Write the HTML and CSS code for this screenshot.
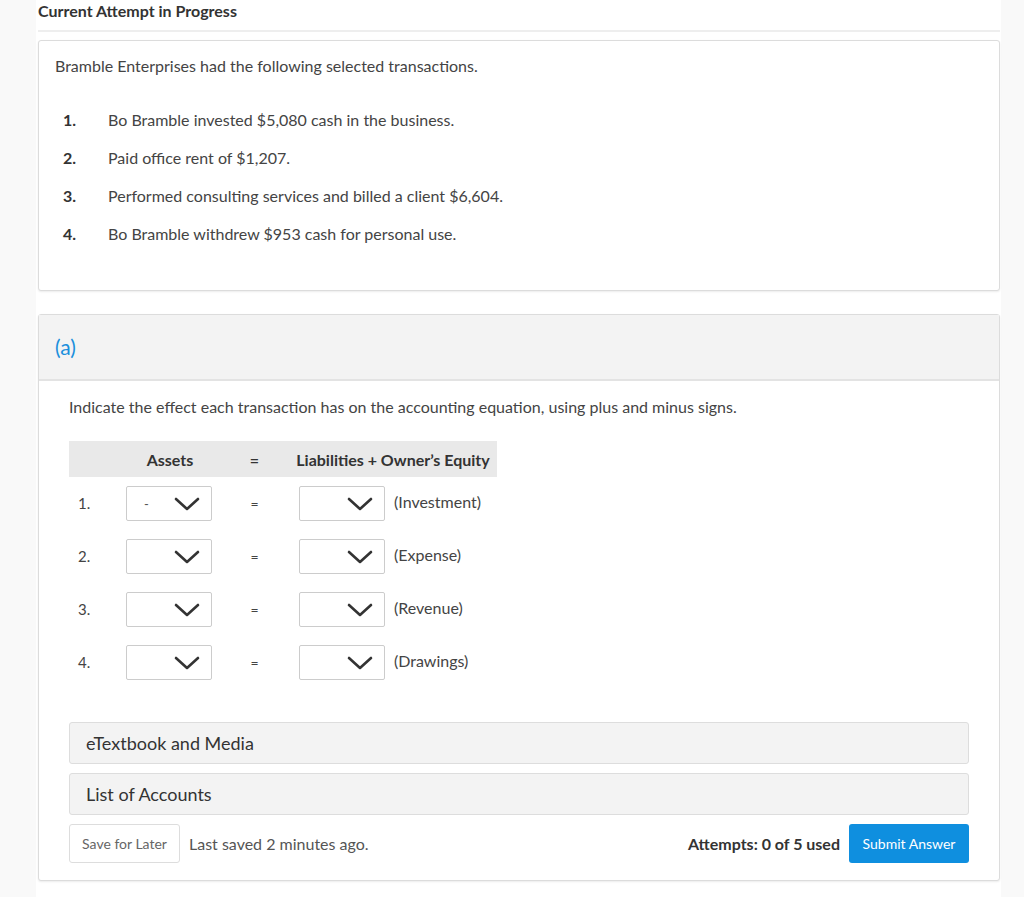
FILE: index.html
```html
<!DOCTYPE html>
<html lang="en">
<head>
	<meta charset="UTF-8">
	<title>Current Attempt in Progress</title>
	<link rel="stylesheet" href="styles.css">
</head>
<body>
	<div class="page">
		<div class="attempt-title">Current Attempt in Progress</div>

		<div class="card question">
			<p class="intro">Bramble Enterprises had the following selected transactions.</p>
			<ol class="trans">
				<li><span class="num">1.</span>Bo Bramble invested $5,080 cash in the business.</li>
				<li><span class="num">2.</span>Paid office rent of $1,207.</li>
				<li><span class="num">3.</span>Performed consulting services and billed a client $6,604.</li>
				<li><span class="num">4.</span>Bo Bramble withdrew $953 cash for personal use.</li>
			</ol>
		</div>

		<div class="card part">
			<div class="part-head">(a)</div>
			<div class="part-body">
				<p class="instr">Indicate the effect each transaction has on the accounting equation, using plus and minus signs.</p>

				<table class="eq">
					<thead>
						<tr>
							<th class="c-num"></th>
							<th class="c-as">Assets</th>
							<th class="c-eq">=</th>
							<th class="c-li">Liabilities + Owner’s Equity</th>
						</tr>
					</thead>
					<tbody>
						<tr>
							<td class="c-num">1.</td>
							<td class="c-as"><div class="sel"><span class="val">-</span><svg class="chev" width="26" height="14" viewBox="0 0 26 14"><polyline points="2,2 13,12 24,2"/></svg></div></td>
							<td class="c-eq">=</td>
							<td class="c-li"><div class="li-wrap"><div class="sel"><span class="val"></span><svg class="chev" width="26" height="14" viewBox="0 0 26 14"><polyline points="2,2 13,12 24,2"/></svg></div><span class="tag">(Investment)</span></div></td>
						</tr>
						<tr>
							<td class="c-num">2.</td>
							<td class="c-as"><div class="sel"><span class="val"></span><svg class="chev" width="26" height="14" viewBox="0 0 26 14"><polyline points="2,2 13,12 24,2"/></svg></div></td>
							<td class="c-eq">=</td>
							<td class="c-li"><div class="li-wrap"><div class="sel"><span class="val"></span><svg class="chev" width="26" height="14" viewBox="0 0 26 14"><polyline points="2,2 13,12 24,2"/></svg></div><span class="tag">(Expense)</span></div></td>
						</tr>
						<tr>
							<td class="c-num">3.</td>
							<td class="c-as"><div class="sel"><span class="val"></span><svg class="chev" width="26" height="14" viewBox="0 0 26 14"><polyline points="2,2 13,12 24,2"/></svg></div></td>
							<td class="c-eq">=</td>
							<td class="c-li"><div class="li-wrap"><div class="sel"><span class="val"></span><svg class="chev" width="26" height="14" viewBox="0 0 26 14"><polyline points="2,2 13,12 24,2"/></svg></div><span class="tag">(Revenue)</span></div></td>
						</tr>
						<tr>
							<td class="c-num">4.</td>
							<td class="c-as"><div class="sel"><span class="val"></span><svg class="chev" width="26" height="14" viewBox="0 0 26 14"><polyline points="2,2 13,12 24,2"/></svg></div></td>
							<td class="c-eq">=</td>
							<td class="c-li"><div class="li-wrap"><div class="sel"><span class="val"></span><svg class="chev" width="26" height="14" viewBox="0 0 26 14"><polyline points="2,2 13,12 24,2"/></svg></div><span class="tag">(Drawings)</span></div></td>
						</tr>
					</tbody>
				</table>

				<div class="bar">eTextbook and Media</div>
				<div class="bar">List of Accounts</div>

				<div class="actions">
					<button class="btn-save">Save for Later</button>
					<span class="saved">Last saved 2 minutes ago.</span>
					<span class="attempts">Attempts: 0 of 5 used</span>
					<button class="btn-submit">Submit Answer</button>
				</div>
			</div>
		</div>
	</div>
</body>
</html>
```

FILE: styles.css
```css
*{padding:0;margin:0;box-sizing:border-box;}
body{background:#f9f9f9;font-family:Lato,"Open Sans",sans-serif;color:#333;}
.page{margin-left:36px;width:965px;min-height:897px;background:#fff;padding:0 1px 0 2px;}

.attempt-title{font-size:16px;font-weight:bold;color:#333;height:32px;padding-top:1px;border-bottom:2px solid #eee;}

.card{border:1px solid #dcdcdc;border-radius:3px;box-shadow:0 1px 2px rgba(0,0,0,0.08);background:#fff;}
.question{margin-top:8px;height:251px;padding:15px 16px 0 16px;}
.intro{font-size:16px;line-height:20px;color:#444;}
.trans{list-style:none;margin-top:24px;}
.trans li{display:flex;height:38px;align-items:center;font-size:16px;color:#444;}
.trans .num{width:53px;padding-left:8px;font-weight:bold;color:#333;}

.part{margin-top:23px;padding-bottom:17px;}
.part-head{height:66px;background:#f3f3f3;border-bottom:2px solid #e3e3e3;color:#1a8fdc;font-size:21px;padding:19px 0 0 16px;}
.part-body{padding:0 30px;}
.instr{font-size:16px;line-height:20px;color:#444;margin-top:16px;}

.eq{border-collapse:collapse;margin-top:24px;font-size:16px;color:#444;}
.eq th{background:#e9e9e9;height:36px;font-weight:bold;color:#333;}
.eq td{height:53px;vertical-align:top;padding-top:9px;}
.c-num{width:45px;}
.c-as{width:112px;}
.c-eq{width:57px;text-align:center;}
.c-li{width:214px;}
td.c-num{padding-left:9px;line-height:35px;font-size:15px;}
td.c-eq{line-height:35px;font-size:14px;}
td.c-as .sel{margin-left:12px;}
th.c-li{padding-left:6px;}
.li-wrap{display:flex;align-items:flex-start;padding-left:16px;}
.tag{margin-left:9px;line-height:20px;margin-top:6px;}

.sel{width:86px;height:35px;border:1px solid #ccc;border-radius:2px;display:flex;align-items:center;background:#fff;}
.sel .val{width:47px;padding-left:17px;color:#555;font-size:13px;}
.chev{display:block;}
.chev polyline{fill:none;stroke:#333;stroke-width:2.6;stroke-linecap:round;stroke-linejoin:round;}

.bar{height:42px;background:#f3f3f3;border:1px solid #ddd;border-radius:3px;font-size:18px;color:#333;padding:9px 0 0 16px;}
.eq + .bar{margin-top:33px;}
.bar + .bar{margin-top:9px;}

.actions{display:flex;align-items:center;margin-top:9px;height:39px;}
.btn-save{height:39px;width:111px;background:#fff;border:1px solid #ddd;border-radius:3px;color:#666;font-family:Lato,sans-serif;font-size:14px;}
.saved{margin-left:9px;font-size:16px;color:#555;}
.attempts{margin-left:auto;font-size:16px;font-weight:bold;color:#333;}
.btn-submit{margin-left:9px;height:39px;width:120px;background:#0f8fdf;border:none;border-radius:3px;color:#fff;font-family:Lato,sans-serif;font-size:14px;}
```
